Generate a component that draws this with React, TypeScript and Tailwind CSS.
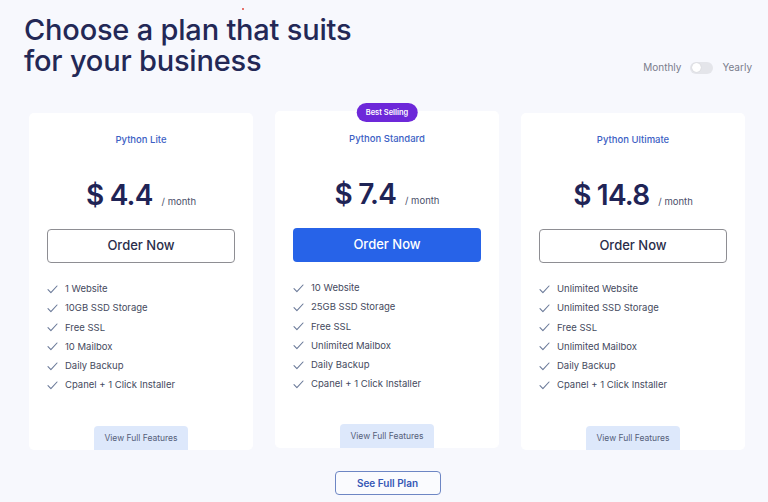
import React from "react";

type Plan = {
  name: string;
  price: string;
  features: string[];
  featured?: boolean;
};

const plans: Plan[] = [
  {
    name: "Python Lite",
    price: "$ 4.4",
    features: ["1 Website", "10GB SSD Storage", "Free SSL", "10 Mailbox", "Daily Backup", "Cpanel + 1 Click Installer"],
  },
  {
    name: "Python Standard",
    price: "$ 7.4",
    featured: true,
    features: ["10 Website", "25GB SSD Storage", "Free SSL", "Unlimited Mailbox", "Daily Backup", "Cpanel + 1 Click Installer"],
  },
  {
    name: "Python Ultimate",
    price: "$ 14.8",
    features: ["Unlimited Website", "Unlimited SSD Storage", "Free SSL", "Unlimited Mailbox", "Daily Backup", "Cpanel + 1 Click Installer"],
  },
];

function Check() {
  return (
    <svg width="11" height="9" viewBox="0 0 11 9" fill="none" className="shrink-0">
      <path d="M1 4.6 L3.9 7.6 L10 1" stroke="#6b7a99" strokeWidth="1.1" strokeLinecap="round" strokeLinejoin="round" />
    </svg>
  );
}

function Card({ plan }: { plan: Plan }) {
  return (
    <div
      className={`relative w-[224px] h-[337px] bg-white rounded-[5px] flex flex-col items-center ${
        plan.featured ? "-mt-[2px]" : ""
      }`}
    >
      {plan.featured && (
        <div className="absolute -top-[8px] left-1/2 -translate-x-1/2 h-[19px] px-[9px] rounded-full bg-[#6d28d9] text-white text-[7.5px] font-semibold flex items-center whitespace-nowrap">
          Best Selling
        </div>
      )}
      <div className={`${plan.featured ? "mt-[22px]" : "mt-[21px]"} text-[9.5px] font-medium text-[#3d5fc4] leading-[12px]`}>
        {plan.name}
      </div>
      <div className="mt-[31px] flex items-baseline">
        <span className="text-[28px] font-semibold text-[#1f2456] leading-[36px] tracking-[-0.8px]">{plan.price}</span>
        <span className="ml-[9px] text-[9.5px] text-[#4a4f6a]">/ month</span>
      </div>
      <button
        className={`mt-[16px] w-[188px] h-[34px] rounded-[4px] text-[13px] font-medium ${
          plan.featured
            ? "bg-[#2763e8] text-white"
            : "bg-white border border-[#8e8e93] text-[#2a2d4a]"
        }`}
      >
        Order Now
      </button>
      <ul className="mt-[20px] self-start pl-[18px] flex flex-col gap-[7.3px]">
        {plan.features.map((f) => (
          <li key={f} className="flex items-center gap-[7px] text-[9.5px] leading-[12px] text-[#454a5e]">
            <Check />
            <span>{f}</span>
          </li>
        ))}
      </ul>
      <div className="mt-auto w-[94px] h-[24px] rounded-t-[4px] bg-[#dde8fb] text-[8.5px] text-[#55607a] flex items-center justify-center">
        View Full Features
      </div>
    </div>
  );
}

export default function App() {
  return (
    <div
      className="relative w-[768px] h-[502px] bg-[#f7f8fd] overflow-hidden"
      style={{ fontFamily: "Inter, 'Noto Sans', sans-serif" }}
    >
      <div className="absolute left-[242px] top-[8px] w-[2px] h-[2px] rounded-full bg-[#e0483c]" />
      <div className="flex justify-between items-end pl-[24px] pr-[16px] pt-[14px]">
        <h1 className="text-[29px] leading-[31px] font-medium text-[#232856] tracking-[-0.2px]">
          Choose a plan that suits
          <br />
          for your business
        </h1>
        <div className="flex items-center gap-[9px] text-[10px] text-[#7a7d8c] mb-[1px]">
          <span>Monthly</span>
          <div className="w-[23px] h-[12px] rounded-full bg-[#e4e5ea] flex items-center px-[2px]">
            <div className="w-[9px] h-[9px] rounded-full bg-white shadow-[0_0_1px_rgba(0,0,0,0.2)]" />
          </div>
          <span>Yearly</span>
        </div>
      </div>
      <div className="flex items-start gap-[22px] pl-[29px] mt-[37px]">
        {plans.map((p) => (
          <Card key={p.name} plan={p} />
        ))}
      </div>
      <div className="flex justify-center mt-[21px] pl-[7px]">
        <button className="w-[106px] h-[24px] rounded-[4px] border border-[#6d86c4] bg-white/40 text-[10px] font-semibold text-[#3556b5]">
          See Full Plan
        </button>
      </div>
    </div>
  );
}
